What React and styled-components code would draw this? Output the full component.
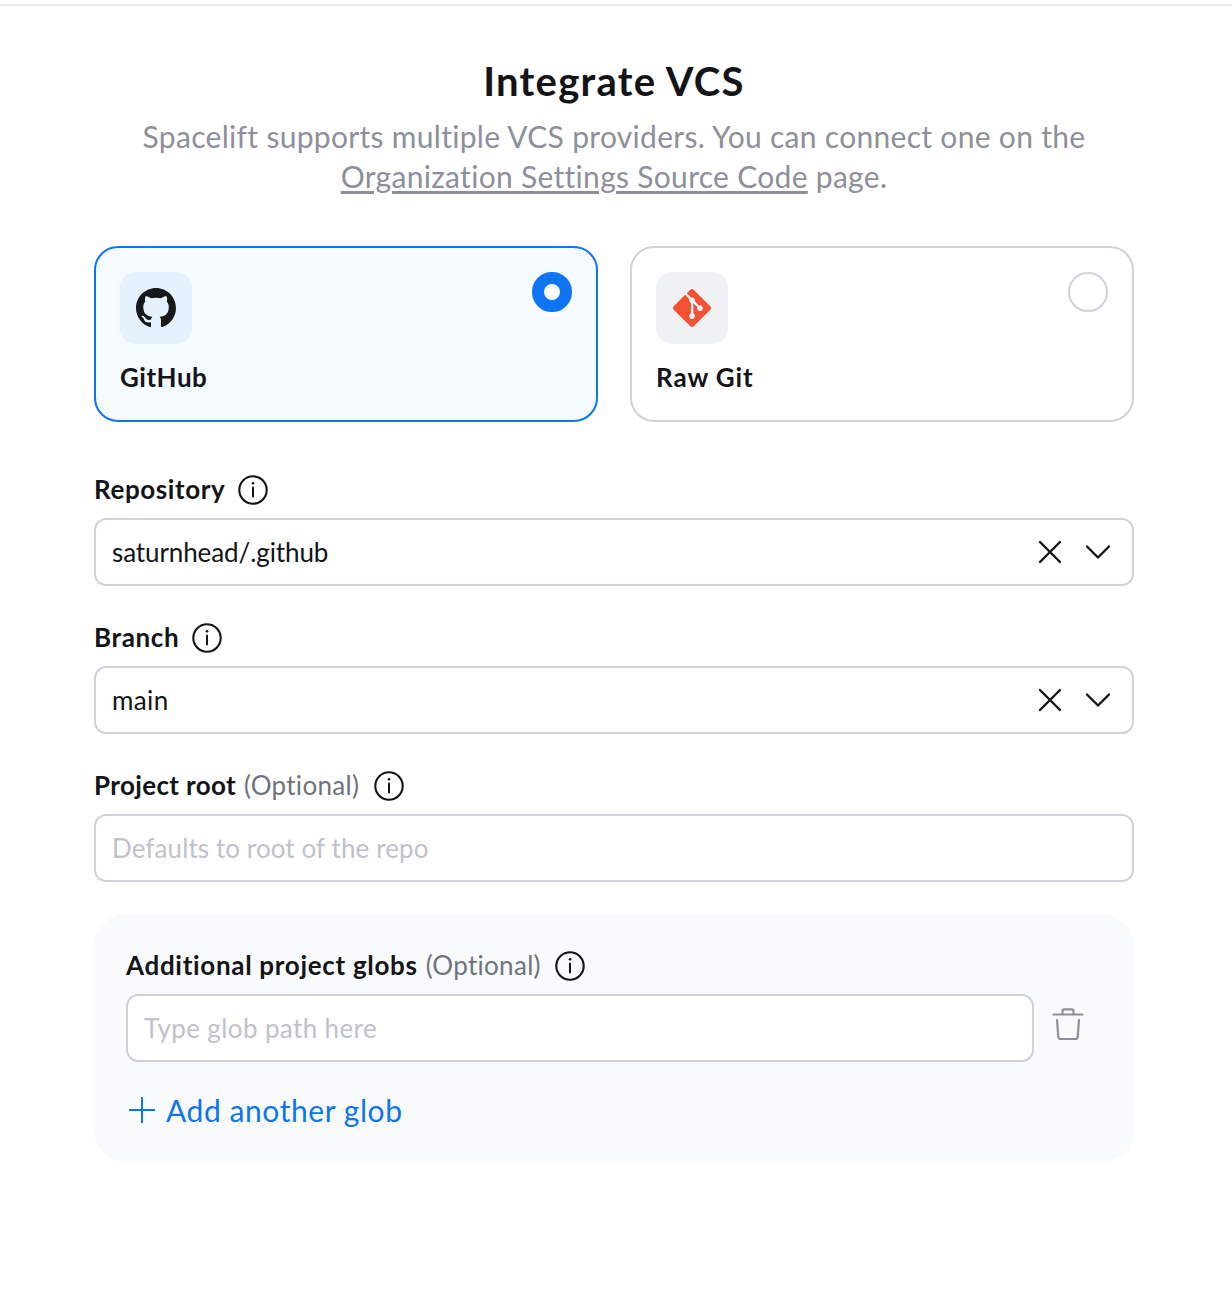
import React, { useState } from "react";
import styled, { createGlobalStyle } from "styled-components";
import { SiGit } from "react-icons/si";

const GlobalStyle = createGlobalStyle`
  * {
    box-sizing: border-box;
  }

  body {
    margin: 0;
    background: #ffffff;
    color: #121417;
    font-family: Lato, "Noto Sans", sans-serif;
    font-size: 26px;
    line-height: 36px;
  }
`;

const Page = styled.main`
  min-height: 1298px;
  padding: 4px 98px 0 94px;
`;

const TopLine = styled.div`
  height: 2px;
  margin: 0 -98px 0 -94px;
  background: #e8e8ec;
`;

const Heading = styled.header`
  padding: 51px 0 50px;
  text-align: center;
`;

const Title = styled.h1`
  margin: 0 0 11px;
  font-size: 40px;
  font-weight: 700;
  line-height: 48px;
  letter-spacing: 1.25px;
`;

const Subtitle = styled.p`
  margin: 0;
  color: #8d8f9b;
  font-size: 30px;
  line-height: 40px;
  letter-spacing: 0.3px;
  white-space: nowrap;
`;

const Text = styled.span`
  white-space: nowrap;
  letter-spacing: ${({ $tracking }) => $tracking || 0}px;
`;

const SettingsLink = styled.a`
  color: inherit;
  text-decoration: underline;
  text-decoration-thickness: 3px;
  text-underline-offset: 3px;
`;

const Providers = styled.div`
  display: grid;
  grid-template-columns: 1fr 1fr;
  gap: 32px;
  margin-bottom: 50px;
`;

const ProviderCard = styled.button`
  display: flex;
  align-items: flex-start;
  justify-content: space-between;
  height: 176px;
  padding: 24px;
  border: 2px solid ${({ $active }) => ($active ? "#0d74f2" : "#d1d1d9")};
  border-radius: 24px;
  background: ${({ $active }) => ($active ? "#f5faff" : "#ffffff")};
  color: inherit;
  font: inherit;
  text-align: left;
  cursor: pointer;
`;

const ProviderInfo = styled.div`
  display: flex;
  flex-direction: column;
  gap: 15px;
  font-weight: 700;
`;

const ProviderIcon = styled.div`
  display: flex;
  align-items: center;
  justify-content: center;
  width: 72px;
  height: 72px;
  border-radius: 16px;
  background: ${({ $active }) => ($active ? "#e5f1fe" : "#f0f1f4")};
`;

const Radio = styled.span`
  width: 40px;
  height: 40px;
  border: ${({ $active }) => ($active ? "12px solid #0d74f2" : "2px solid #d1d1d9")};
  border-radius: 50%;
  background: #ffffff;
`;

const Field = styled.div`
  margin-bottom: ${({ $last }) => ($last ? 32 : 34)}px;
`;

const Label = styled.label`
  display: flex;
  align-items: center;
  height: 36px;
  margin-bottom: 10px;
  font-weight: 700;

  span {
    padding-bottom: 2px;
  }

  svg {
    margin-left: ${({ $optional }) => ($optional ? 14.5 : 13)}px;
  }
`;

const Optional = styled.span`
  margin-left: 8px;
  color: #6f737e;
  font-weight: 400;
  letter-spacing: 0.3px;
`;

const Control = styled.div`
  display: flex;
  align-items: center;
  justify-content: space-between;
  height: 68px;
  padding: 0 18px 0 16px;
  border: 2px solid #d1d1d9;
  border-radius: 12px;
  background: #ffffff;
`;

const Actions = styled.div`
  display: flex;
  align-items: center;
  gap: 16px;
`;

const Input = styled.input`
  flex: 1;
  min-width: 0;
  padding: 0;
  border: 0;
  outline: 0;
  background: transparent;
  color: inherit;
  font: inherit;
  letter-spacing: ${({ $tracking }) => $tracking || 0}px;

  &::placeholder {
    color: #c1c1ca;
    opacity: 1;
  }
`;

const GlobPanel = styled.section`
  height: 248px;
  padding: 34px 32px 0;
  border-radius: 32px;
  background: #f9fafc;
`;

const GlobRow = styled.div`
  display: grid;
  grid-template-columns: 908px 32px;
  gap: 18px;
`;

const IconButton = styled.button`
  display: flex;
  padding: 0;
  border: 0;
  background: none;
  color: inherit;
  cursor: pointer;
`;

const TrashButton = styled(IconButton)`
  align-items: flex-start;
  padding-top: 12px;
  color: #8d8f9b;
`;

const AddButton = styled(IconButton)`
  align-items: center;
  gap: 8px;
  margin-top: 28px;
  color: #0d74f2;
  font: inherit;
  font-size: 30px;
  line-height: 40px;
`;

const GithubIcon = () => (
  <svg width="40" height="40" viewBox="0 0 16 16" fill="#17181a">
    <path d="M8 0C3.58 0 0 3.58 0 8c0 3.54 2.29 6.53 5.47 7.59.4.07.55-.17.55-.38 0-.19-.01-.82-.01-1.49-2.01.37-2.53-.49-2.69-.94-.09-.23-.48-.94-.82-1.13-.28-.15-.68-.52-.01-.53.63-.01 1.08.58 1.23.82.72 1.21 1.87.87 2.33.66.07-.52.28-.87.51-1.07-1.78-.2-3.64-.89-3.64-3.95 0-.87.31-1.59.82-2.15-.08-.2-.36-1.02.08-2.12 0 0 .67-.21 2.2.82.64-.18 1.32-.27 2-.27.68 0 1.36.09 2 .27 1.53-1.04 2.2-.82 2.2-.82.44 1.1.16 1.92.08 2.12.51.56.82 1.27.82 2.15 0 3.07-1.87 3.75-3.65 3.95.29.25.54.73.54 1.48 0 1.07-.01 1.93-.01 2.2 0 .21.15.46.55.38A8.013 8.013 0 0016 8c0-4.42-3.58-8-8-8z" />
  </svg>
);

const InfoIcon = () => (
  <svg width="30" height="30" viewBox="0 0 30 30" fill="none" stroke="#121417">
    <circle cx="15" cy="15" r="13.7" strokeWidth="2.1" />
    <path d="M15 12.5V21.5" strokeWidth="2" strokeLinecap="round" />
    <circle cx="15" cy="8.3" r="1.3" fill="#121417" stroke="none" />
  </svg>
);

const ClearIcon = () => (
  <svg width="32" height="32" viewBox="0 0 32 32" fill="none" stroke="#121417" strokeWidth="2.4">
    <path d="M6 6l20 20M26 6L6 26" strokeLinecap="round" />
  </svg>
);

const ChevronIcon = () => (
  <svg width="32" height="32" viewBox="0 0 32 32" fill="none" stroke="#121417" strokeWidth="2.3">
    <path d="M5 10.5l11 11 11-11" strokeLinecap="round" strokeLinejoin="round" />
  </svg>
);

const TrashIcon = () => (
  <svg width="32" height="34" viewBox="0 0 32 34" fill="none" stroke="currentColor" strokeWidth="2.2">
    <path d="M1.5 8.5h29M10.5 8.5V5q0-1.7 1.7-1.7h7.6q1.7 0 1.7 1.7v3.5M5 14l1.3 17q.2 2 2.2 2h15q2 0 2.2-2L27 14" strokeLinecap="round" />
  </svg>
);

const PlusIcon = () => (
  <svg width="32" height="32" viewBox="0 0 32 32" fill="none" stroke="currentColor" strokeWidth="2">
    <path d="M16 3v26M3 16h26" />
  </svg>
);

const Provider = ({ name, icon, tracking, active, onSelect }) => (
  <ProviderCard type="button" $active={active} onClick={onSelect}>
    <ProviderInfo>
      <ProviderIcon $active={active}>{icon}</ProviderIcon>
      <Text $tracking={tracking}>{name}</Text>
    </ProviderInfo>
    <Radio $active={active} />
  </ProviderCard>
);

const FieldLabel = ({ text, tracking, optional }) => (
  <Label $optional={optional}>
    <Text $tracking={tracking}>{text}</Text>
    {optional && <Optional>(Optional)</Optional>}
    <InfoIcon />
  </Label>
);

const Select = ({ value, tracking, onClear }) => (
  <Control>
    <Text $tracking={tracking}>{value}</Text>
    <Actions>
      <IconButton type="button" onClick={onClear}>
        <ClearIcon />
      </IconButton>
      <ChevronIcon />
    </Actions>
  </Control>
);

const App = () => {
  const [provider, setProvider] = useState("github");
  const [repository, setRepository] = useState("saturnhead/.github");
  const [branch, setBranch] = useState("main");

  return (
    <>
      <GlobalStyle />
      <Page>
        <TopLine />
        <Heading>
          <Title>Integrate VCS</Title>
          <Subtitle>
            Spacelift supports multiple VCS providers. You can connect one on the
            <br />
            <SettingsLink>Organization Settings Source Code</SettingsLink> page.
          </Subtitle>
        </Heading>
        <Providers>
          <Provider
            name="GitHub"
            tracking={0.5}
            icon={<GithubIcon />}
            active={provider === "github"}
            onSelect={() => setProvider("github")}
          />
          <Provider
            name="Raw Git"
            tracking={0.9}
            icon={<SiGit size={38} color="#f45132" />}
            active={provider === "git"}
            onSelect={() => setProvider("git")}
          />
        </Providers>
        <Field>
          <FieldLabel text="Repository" tracking={0.6} />
          <Select value={repository} tracking={-0.1} onClear={() => setRepository("")} />
        </Field>
        <Field>
          <FieldLabel text="Branch" tracking={0.65} />
          <Select value={branch} tracking={0.4} onClear={() => setBranch("")} />
        </Field>
        <Field $last>
          <FieldLabel text="Project root" tracking={0.35} optional />
          <Control>
            <Input placeholder="Defaults to root of the repo" $tracking={0.1} />
          </Control>
        </Field>
        <GlobPanel>
          <FieldLabel text="Additional project globs" tracking={0.69} optional />
          <GlobRow>
            <Control>
              <Input placeholder="Type glob path here" $tracking={0.38} />
            </Control>
            <TrashButton type="button">
              <TrashIcon />
            </TrashButton>
          </GlobRow>
          <AddButton type="button">
            <PlusIcon />
            <Text $tracking={0.57}>Add another glob</Text>
          </AddButton>
        </GlobPanel>
      </Page>
    </>
  );
};

export default App;
